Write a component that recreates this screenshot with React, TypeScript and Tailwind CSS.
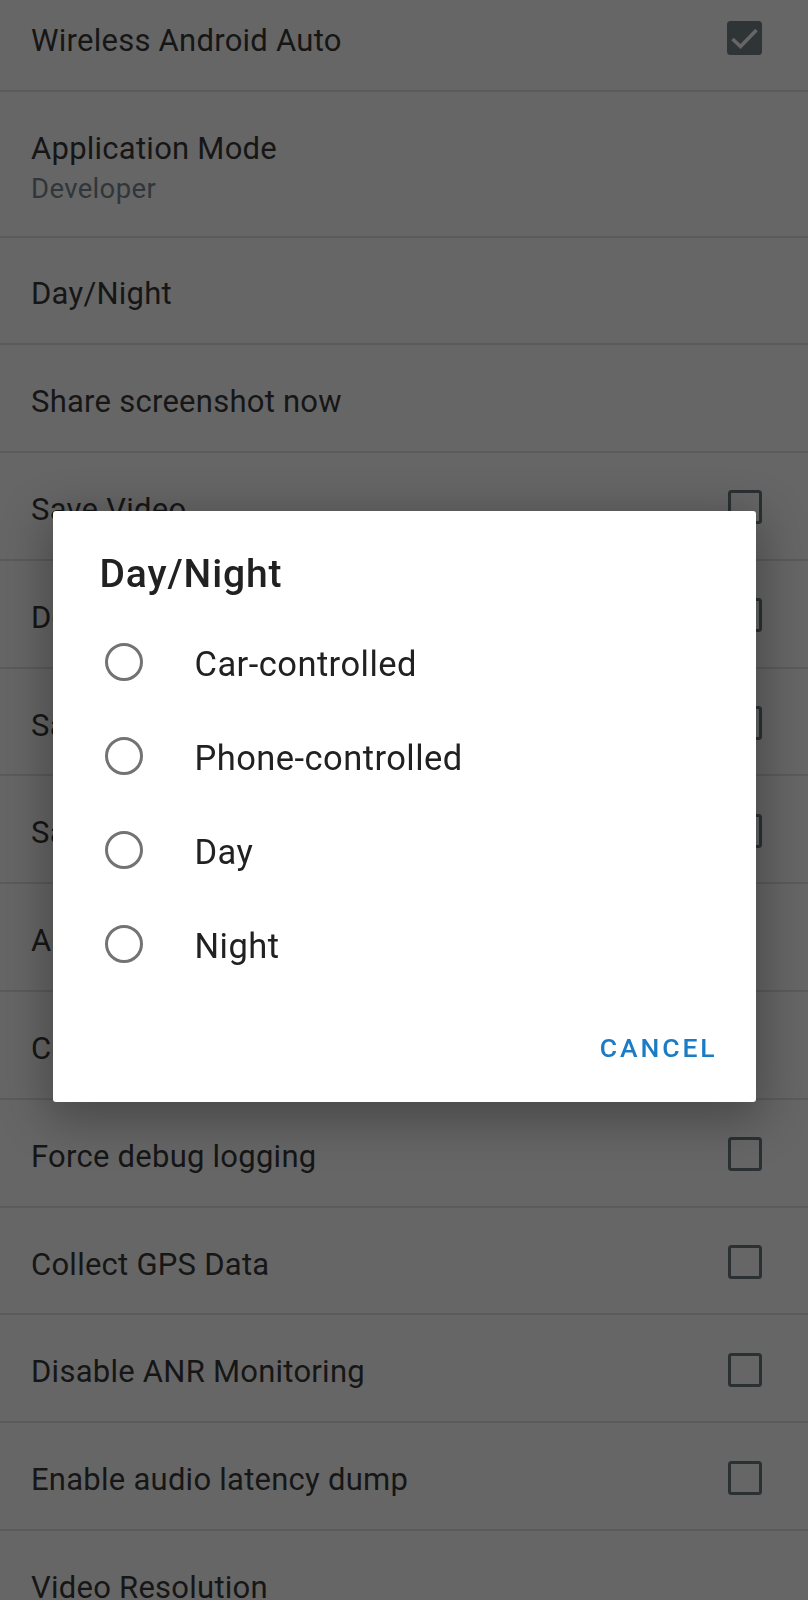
import React from "react";

// Settings rows behind the dialog (the scrim colours are baked in)
interface Row {
  title: string;
  summary?: string;
  checkbox?: "on" | "off";
}

const rows: Row[] = [
  { title: "Wireless Android Auto", checkbox: "on" },
  { title: "Application Mode", summary: "Developer" },
  { title: "Day/Night" },
  { title: "Share screenshot now" },
  { title: "Save Video", checkbox: "off" },
  { title: "Demand video focus", checkbox: "off" },
  { title: "Save audio", checkbox: "off" },
  { title: "Save microphone input", checkbox: "off" },
  { title: "Audio codec" },
  { title: "Car region" },
  { title: "Force debug logging", checkbox: "off" },
  { title: "Collect GPS Data", checkbox: "off" },
  { title: "Disable ANR Monitoring", checkbox: "off" },
  { title: "Enable audio latency dump", checkbox: "off" },
  { title: "Video Resolution" },
];

const options = ["Car-controlled", "Phone-controlled", "Day", "Night"];

function CheckBox({ state }: { state: "on" | "off" }) {
  if (state === "on") {
    return (
      <svg width="35" height="34" viewBox="0 0 35 34" className="shrink-0">
        <rect x="0" y="0" width="35" height="34" rx="3.5" fill="#2f3537" />
        <polyline
          points="5.5,18 13.5,25.5 29.5,9"
          fill="none"
          stroke="#666666"
          strokeWidth="3.6"
        />
      </svg>
    );
  }
  return <div className="w-[34px] h-[34px] shrink-0 rounded-[3.5px] border-[3px] border-[#2b3133]" />;
}

function SettingRow({ row }: { row: Row }) {
  const tall = !!row.summary;
  return (
    <div
      className={`flex items-center justify-between border-b-2 border-[#5b5b5b] pl-[31px] pr-[46px] ${
        tall ? "h-[146px] pt-[10px]" : "h-[107.8px] pt-[3px]"
      }`}
    >
      <div className={`flex flex-col ${tall ? "" : "pt-[5px]"}`}>
        <span className="text-[31px] leading-[40px] tracking-[0.25px] text-[#161616]">{row.title}</span>
        {row.summary && (
          <span className="text-[27.5px] leading-[40px] tracking-[0.35px] text-[#30363a]">{row.summary}</span>
        )}
      </div>
      {row.checkbox && <CheckBox state={row.checkbox} />}
    </div>
  );
}

export default function App() {
  return (
    <div className="relative w-[808px] h-[1600px] overflow-hidden bg-[#666666] font-['Roboto',sans-serif]">
      {/* settings list, scrolled a little */}
      <div className="flex flex-col -mt-[16.3px]">
        {rows.map((r) => (
          <SettingRow key={r.title} row={r} />
        ))}
      </div>

      {/* Day/Night dialog */}
      <div className="fixed inset-0 flex items-center justify-center pt-[13px]">
        <div className="w-[703px] bg-white rounded-[3px] shadow-[0_12px_48px_6px_rgba(0,0,0,0.3)] flex flex-col">
          <h2 className="pt-[41px] pl-[47px] text-[39px] leading-[44px] tracking-[0.9px] font-medium text-[#212121]">
            Day/Night
          </h2>
          <div className="mt-[19px] flex flex-col">
            {options.map((o) => (
              <div key={o} className="h-[94px] flex items-center pl-[52px]">
                <span className="w-[38px] h-[38px] shrink-0 rounded-full border-[3px] border-[#737373]" />
                <span className="ml-[52px] pt-[5px] text-[34.5px] tracking-[0.45px] text-[#212121]">{o}</span>
              </div>
            ))}
          </div>
          <div className="flex justify-end pr-[22px] pt-[23px] pb-[20px]">
            <button className="h-[68px] px-[16px] flex items-center text-[26.5px] font-medium tracking-[0.11em] text-[#1b7bc4]">
              CANCEL
            </button>
          </div>
        </div>
      </div>
    </div>
  );
}
